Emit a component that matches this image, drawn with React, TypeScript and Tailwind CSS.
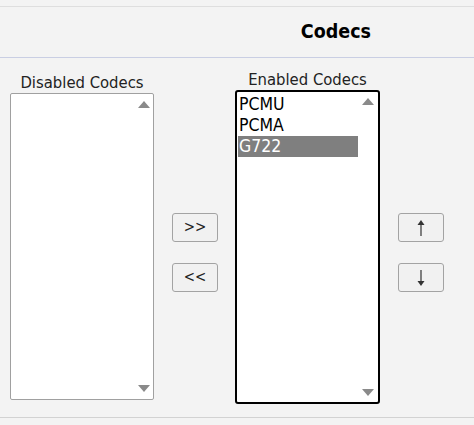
import React from "react";

const font = "font-['DejaVu_Sans_Condensed','Liberation_Sans',sans-serif]";

function Arrow({ dir }: { dir: "up" | "down" }) {
  return (
    <svg width="12" height="7" viewBox="0 0 12 7" className="block">
      {dir === "up" ? (
        <polygon points="6,0 12,7 0,7" fill="#8a8a8a" />
      ) : (
        <polygon points="0,0 12,0 6,7" fill="#8a8a8a" />
      )}
    </svg>
  );
}

// thin vertical arrow used on the move up / move down buttons
function MoveArrow({ dir }: { dir: "up" | "down" }) {
  return (
    <svg width="8" height="16" viewBox="0 0 8 16" className="mx-auto block">
      <g transform={dir === "down" ? "rotate(180 4 8)" : undefined}>
        <line x1="4" y1="2" x2="4" y2="16" stroke="#333" strokeWidth="1.2" />
        <polygon points="4,0 7.5,5 0.5,5" fill="#333" />
      </g>
    </svg>
  );
}

function SmallButton({ children }: { children: React.ReactNode }) {
  return (
    <button className="flex h-[29px] w-[46px] items-center justify-center rounded-[3px] border border-[#a3a3a3] bg-[#f1f1f1] text-[15px] leading-none text-[#222]">
      {children}
    </button>
  );
}

const enabled = ["PCMU", "PCMA", "G722"];

export default function App() {
  return (
    <div className={`h-[425px] w-[474px] overflow-hidden bg-[#f3f3f3] text-black ${font}`}>
      {/* Header */}
      <div className="mt-[6px] flex h-[52px] items-center justify-end border-t border-b border-t-[#dedede] border-b-[#c9cee3] pr-[103px]">
        <h1 className="text-[19.5px] font-bold">Codecs</h1>
      </div>

      {/* Lists */}
      <div className="flex h-[360px] items-start border-b border-[#d2d2d2]">
        <div className="ml-[10px] w-[144px]">
          <div className="mt-[14px] text-center text-[16.5px] leading-[21px] text-[#222]">Disabled Codecs</div>
          <div className="flex h-[307px] flex-col items-end justify-between rounded-[2px] border border-[#a0a0a0] bg-white px-[3px] py-[7px]">
            <Arrow dir="up" />
            <Arrow dir="down" />
          </div>
        </div>

        <div className="ml-[18px] mr-[17px] flex flex-col gap-[21px] pt-[155px]">
          <SmallButton>&gt;&gt;</SmallButton>
          <SmallButton>&lt;&lt;</SmallButton>
        </div>

        <div className="w-[145px]">
          <div className="mt-[12px] text-center text-[16.5px] leading-[20px] text-[#222]">Enabled Codecs</div>
          <div className="flex h-[314px] rounded-[3px] border-2 border-black bg-white">
            <ul className="flex-1 pt-[2px] pl-[1px]">
              {enabled.map((c) => (
                <li
                  key={c}
                  className={`h-[21px] pl-[1px] text-[17.5px] leading-[21px] ${
                    c === "G722" ? "bg-[#7f7f7f] text-white" : "text-black"
                  }`}
                >
                  {c}
                </li>
              ))}
            </ul>
            <div className="flex w-[20px] flex-col items-center justify-between py-[6px]">
              <Arrow dir="up" />
              <Arrow dir="down" />
            </div>
          </div>
        </div>

        <div className="ml-[18px] flex flex-col gap-[21px] pt-[155px]">
          <SmallButton>
            <MoveArrow dir="up" />
          </SmallButton>
          <SmallButton>
            <MoveArrow dir="down" />
          </SmallButton>
        </div>
      </div>
    </div>
  );
}
